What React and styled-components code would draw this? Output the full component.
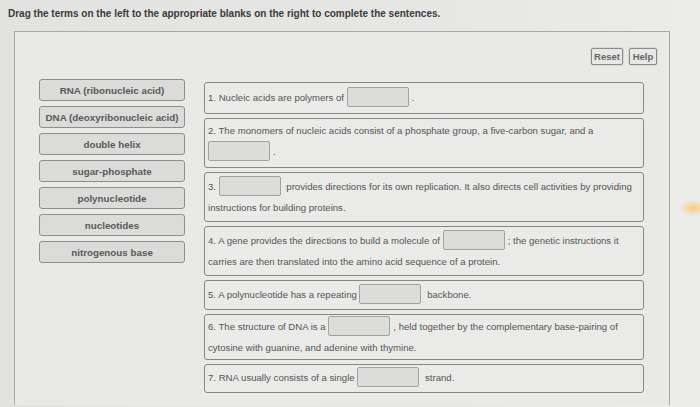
import styled, { createGlobalStyle } from 'styled-components'

const GlobalStyle = createGlobalStyle`
  html, body {
    margin: 0;
    padding: 0;
  }
  body {
    font-family: 'Liberation Sans', Arial, sans-serif;
    background:
      radial-gradient(ellipse 14px 8px at 694px 208px, rgba(255, 200, 110, 0.95), rgba(255, 210, 140, 0) 100%),
      linear-gradient(to right, #e2e2e0 0%, #e6e6e4 60%, #ececea 100%);
    color: #555;
    height: 407px;
    overflow: hidden;
  }
`

const Page = styled.div`
  padding: 8px 0 0 8px;
`

const Instructions = styled.div`
  font-size: 10px;
  font-weight: 700;
  color: #3b3b3b;
  line-height: 12px;
`

const Panel = styled.div`
  margin: 11px 30px 0 6px;
  height: 374px;
  border: 1px solid #a9a9a7;
  border-bottom: none;
  background: #e9e9e7;
  padding: 16px 12px 0 24px;
  box-sizing: border-box;
`

const Toolbar = styled.div`
  display: flex;
  justify-content: flex-end;
  gap: 6px;
`

const ToolButton = styled.button`
  font-family: 'Liberation Sans', Arial, sans-serif;
  font-size: 9.5px;
  font-weight: 700;
  color: #666;
  background: #e7e7e5;
  border: 1px solid #8c8c8c;
  border-radius: 2px;
  height: 17px;
  width: ${({ $w }) => $w}px;
  padding: 0;
  box-shadow: 0 0 0 1px #d6d6d4;
`

const Workspace = styled.div`
  display: flex;
  gap: 19px;
  margin-top: 14px;
`

const TermList = styled.div`
  display: flex;
  flex-direction: column;
  gap: 5px;
  width: 146px;
  flex-shrink: 0;
`

const Term = styled.div`
  height: 22px;
  box-sizing: border-box;
  border: 1px solid #8e8e8e;
  border-radius: 3px;
  background: #dbdbda;
  display: flex;
  align-items: center;
  justify-content: center;
  font-size: 9.8px;
  font-weight: 700;
  color: #595959;
`

const SentenceList = styled.div`
  display: flex;
  flex-direction: column;
  gap: 4px;
  width: 440px;
  margin-top: 3px;
`

const Sentence = styled.div`
  box-sizing: border-box;
  height: ${({ $h }) => $h}px;
  border: 1.5px solid #878787;
  border-radius: 3px;
  background: #eaeae8;
  padding: ${({ $pad }) => $pad || '3px 4px 0 3px'};
  font-size: 9.6px;
  line-height: 21px;
  color: #555;
  white-space: nowrap;
`

const Blank = styled.span`
  display: inline-block;
  vertical-align: middle;
  width: 62px;
  height: 20px;
  box-sizing: border-box;
  margin: -2px 3px 0 0;
  border: 1px solid #a2a2a2;
  border-radius: 2px;
  background: #dcdcdb;
`

const terms = [
  'RNA (ribonucleic acid)',
  'DNA (deoxyribonucleic acid)',
  'double helix',
  'sugar-phosphate',
  'polynucleotide',
  'nucleotides',
  'nitrogenous base',
]

const App = () => (
  <>
    <GlobalStyle />
    <Page>
      <Instructions>
        Drag the terms on the left to the appropriate blanks on the right to complete the sentences.
      </Instructions>
      <Panel>
        <Toolbar>
          <ToolButton $w={32}>Reset</ToolButton>
          <ToolButton $w={28}>Help</ToolButton>
        </Toolbar>
        <Workspace>
          <TermList>
            {terms.map((t) => (
              <Term key={t}>{t}</Term>
            ))}
          </TermList>
          <SentenceList>
            <Sentence $h={32} $pad="4px 4px 0 3px">
              1. Nucleic acids are polymers of <Blank />.
            </Sentence>
            <Sentence $h={50} $pad="1px 4px 0 3px">
              2. The monomers of nucleic acids consist of a phosphate group, a five-carbon sugar, and a
              <br />
              <Blank />.
            </Sentence>
            <Sentence $h={50}>
              3. <Blank /> provides directions for its own replication. It also directs cell activities by providing
              <br />
              instructions for building proteins.
            </Sentence>
            <Sentence $h={50}>
              4. A gene provides the directions to build a molecule of <Blank />; the genetic instructions it
              <br />
              carries are then translated into the amino acid sequence of a protein.
            </Sentence>
            <Sentence $h={30} $pad="3px 4px 0 3px">
              5. A polynucleotide has a repeating <Blank /> backbone.
            </Sentence>
            <Sentence $h={46} $pad="1px 4px 0 3px">
              6. The structure of DNA is a <Blank />, held together by the complementary base-pairing of
              <br />
              cytosine with guanine, and adenine with thymine.
            </Sentence>
            <Sentence $h={29} $pad="2px 4px 0 3px">
              7. RNA usually consists of a single <Blank /> strand.
            </Sentence>
          </SentenceList>
        </Workspace>
      </Panel>
    </Page>
  </>
)

export default App
